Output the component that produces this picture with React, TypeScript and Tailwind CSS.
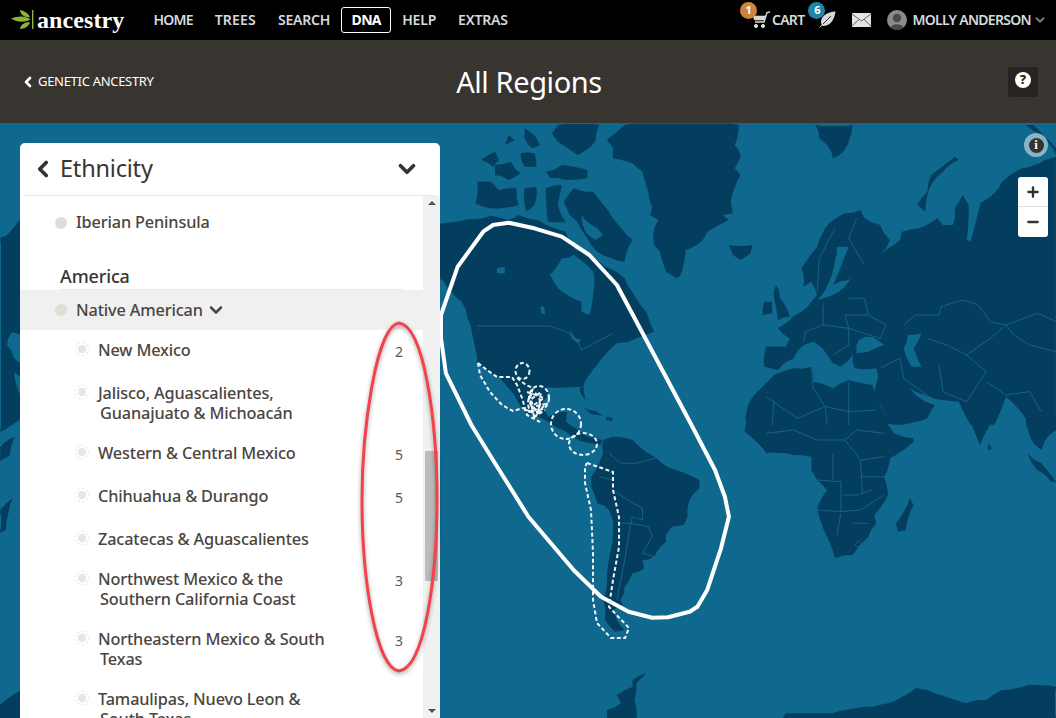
import { ChevronDown, ChevronLeft, Minus, Plus } from "lucide-react";

const FONT = "font-['Noto_Sans','Open_Sans',sans-serif]";

// the map was traced off two crops, so coordinates are converted back to page pixels
const upper = (pts: number[]) => pts.map((v, i) => (i % 2 ? 125 + v / 3 : 440 + v * 0.393));
const lower = (pts: number[]) => pts.map((v, i) => (i % 2 ? 420 + v / 3 : 440 + v * 0.393));
const str = (pts: number[]) => pts.join(" ");

// breaks long straight edges up so the coasts don't look ruler drawn
function rough(pts: number[]) {
  const out: number[] = [];
  const n = pts.length / 2;
  for (let i = 0; i < n; i++) {
    const x1 = pts[i * 2];
    const y1 = pts[i * 2 + 1];
    const x2 = pts[((i + 1) % n) * 2];
    const y2 = pts[((i + 1) % n) * 2 + 1];
    const len = Math.hypot(x2 - x1, y2 - y1);
    const steps = Math.max(1, Math.floor(len / 6));
    for (let s = 0; s < steps; s++) {
      const t = s / steps;
      const wobble = s === 0 ? 0 : Math.sin(x1 * 12.9 + y1 * 78.2 + s * 37.7) * 1.3;
      out.push(x1 + (x2 - x1) * t + ((y2 - y1) / (len || 1)) * wobble, y1 + (y2 - y1) * t - ((x2 - x1) / (len || 1)) * wobble);
    }
  }
  return out;
}

const LAND: number[][] = [
  // left edge wrap
  [0, 238, 6, 236, 22, 217, 22, 335, 12, 332, 7, 345, 14, 358, 22, 365, 22, 378, 14, 372, 20, 395, 22, 417, 0, 432],
  [0, 447, 15, 437, 10, 455, 0, 461],
  [0, 510, 13, 498, 6, 530, 0, 533],
  [0, 705, 22, 690, 22, 718, 0, 718],
  // north america
  [
    ...upper([-10, 295, 70, 283, 130, 272, 170, 285, 200, 270, 250, 285, 270, 300, 320, 320, 345, 375, 420, 425, 470, 460, 525, 560, 545, 620, 500, 640, 480, 650, 450, 655, 420, 690, 400, 720, 365, 780, 370, 825, 355, 790]),
    583, 387, 557, 388, 547, 387, 548, 393, 540, 405, 548, 417, 558, 412, 567, 412, 566, 422, 575, 428, 586, 436, 602, 440, 601, 445, 590, 443, 580, 441, 565, 431, 550, 423, 525, 413, 513, 393, 500, 378, 477, 362,
    ...upper([70, 580, 55, 530, 10, 470, -10, 450]),
  ],
  [584, 408, 596, 411, 603, 416, 591, 414],
  [606, 417, 613, 418, 612, 421, 606, 420],
  ...[
    [215, 10, 240, 30, 255, 60, 235, 70, 215, 40],
    [285, 25, 300, 0, 405, 0, 395, 50, 350, 90, 325, 70, 300, 50],
    [105, 105, 140, 80, 150, 105, 135, 125],
    [175, 30, 190, 45, 165, 60],
    [140, 120, 180, 110, 205, 145, 175, 165, 140, 150],
    [205, 85, 240, 85, 245, 125, 215, 125],
    [270, 140, 310, 120, 375, 135, 375, 160, 320, 165, 280, 160],
    [95, 170, 130, 170, 150, 195, 195, 190, 200, 240, 130, 250, 90, 235],
    [215, 190, 245, 185, 240, 240, 220, 260],
    [270, 190, 310, 180, 300, 240, 320, 290, 275, 290],
    [315, 230, 340, 190, 390, 200, 430, 260, 490, 345, 470, 410, 400, 380, 350, 290, 330, 270],
    // greenland
    [430, 40, 470, 0, 760, 0, 750, 60, 765, 95, 750, 130, 765, 150, 740, 230, 745, 265, 720, 270, 735, 285, 680, 320, 660, 355, 625, 375, 610, 455, 600, 458, 575, 440, 560, 380, 545, 360, 545, 310, 555, 285, 535, 270, 540, 245, 530, 200, 515, 140, 490, 115, 440, 100, 440, 70, 425, 45],
    // svalbard, iceland, britain, ireland, novaya zemlya
    [955, 0, 1050, 0, 1030, 75, 1000, 100, 985, 60, 965, 40],
    [735, 360, 795, 360, 790, 385, 765, 405, 745, 390],
    [855, 480, 865, 520, 890, 575, 860, 585, 850, 520],
    [825, 530, 845, 530, 845, 565, 820, 570],
    [1240, 200, 1250, 150, 1310, 95, 1320, 105, 1280, 140, 1245, 190, 1235, 260, 1215, 240],
    [1490, 0, 1510, 0, 1568, 70, 1568, 90, 1530, 30],
    // eurasia
    [1568, 95, 1540, 105, 1480, 130, 1430, 170, 1400, 215, 1375, 235, 1350, 350, 1340, 345, 1345, 240, 1330, 210, 1310, 250, 1305, 300, 1280, 300, 1265, 280, 1220, 310, 1175, 320, 1170, 345, 1140, 370, 1120, 390, 1145, 345, 1120, 300, 1080, 280, 1070, 255, 1030, 265, 990, 295, 960, 365, 920, 430, 925, 485, 945, 470, 960, 510, 945, 530, 920, 560, 885, 590, 860, 610, 890, 640, 880, 665, 830, 665, 825, 725, 860, 735, 900, 700, 925, 660, 950, 650, 985, 690, 1000, 715, 1020, 725, 1050, 690, 1055, 730, 1110, 730, 1115, 755, 1105, 800, 1150, 895, 1165, 900, 1240, 880, 1260, 840, 1235, 830, 1210, 810, 1195, 790, 1280, 825, 1320, 830, 1350, 900, 1410, 900, 1440, 815, 1490, 880, 1495, 900, 1568, 900, 1568, 95],
    // africa, north half
    [780, 860, 800, 810, 850, 750, 900, 730, 945, 725, 950, 770, 1000, 790, 1040, 765, 1100, 780, 1130, 860, 1160, 900, 780, 900],
  ].map(upper),
  ...[
    // africa, south half
    [780, 0, 775, 35, 830, 100, 900, 105, 945, 110, 945, 150, 960, 180, 985, 210, 960, 265, 985, 350, 1005, 415, 1050, 405, 1090, 350, 1110, 310, 1105, 285, 1140, 225, 1130, 170, 1145, 115, 1205, 65, 1205, 55, 1155, 40, 1130, 0],
    [1195, 235, 1205, 255, 1185, 330, 1165, 335, 1160, 310],
    // south america
    [415, 60, 440, 50, 490, 60, 530, 100, 565, 130, 600, 150, 660, 180, 660, 205, 635, 240, 630, 290, 620, 315, 590, 320, 575, 345, 575, 365, 545, 410, 515, 420, 520, 445, 490, 460, 470, 500, 460, 540, 465, 555, 440, 570, 450, 600, 470, 630, 445, 635, 420, 600, 415, 540, 425, 470, 435, 390, 440, 300, 430, 270, 400, 250, 385, 200, 385, 170, 405, 130, 415, 100],
    // antarctica and peninsula
    [870, 900, 880, 880, 1000, 880, 1100, 860, 1140, 850, 1210, 805, 1240, 810, 1340, 850, 1390, 840, 1430, 810, 1495, 795, 1568, 800, 1568, 900],
    [525, 758, 490, 780, 490, 800, 450, 825, 460, 850, 425, 870, 425, 900, 500, 900, 495, 840, 500, 790],
    // india tip, se asia
    [1350, 0, 1375, 75, 1410, 0],
    [1395, 70, 1405, 85, 1395, 92],
    [1490, 0, 1510, 70, 1530, 90, 1540, 60, 1568, 30, 1568, 0],
    [1495, 100, 1530, 130, 1568, 185, 1555, 185, 1520, 150],
  ].map(lower),
];

const SEAS: number[][] = [
  [280, 450, 310, 400, 340, 390, 390, 440, 390, 500, 380, 570, 360, 560, 360, 530, 300, 490],
  [145, 430, 165, 425, 165, 445, 145, 445],
  [255, 545, 265, 545, 268, 570, 258, 565],
  [360, 270, 400, 310, 415, 330, 395, 345, 370, 320],
  [1010, 365, 1040, 365, 1015, 440, 1000, 480, 1040, 465, 1050, 450, 1015, 500, 960, 525, 990, 470],
  [1065, 645, 1100, 635, 1130, 660, 1090, 680, 1060, 685],
  [1190, 630, 1225, 625, 1205, 670, 1225, 725, 1200, 725, 1180, 670],
  [330, 615, 345, 640, 360, 645, 350, 655, 335, 640],
];

const BORDERS: number[][] = [
  ...[
    [95, 603, 280, 603, 320, 620, 350, 645, 360, 675, 440, 625],
    [1005, 310, 965, 400, 960, 500],
    [1060, 280, 1040, 340, 1080, 420],
    [975, 540, 975, 600, 930, 620, 925, 650],
    [1030, 570, 1090, 570, 1135, 600, 1120, 640, 1040, 610, 1030, 570],
    [975, 600, 1040, 610, 1040, 660, 1000, 690],
    [1040, 520, 1080, 520, 1090, 570],
    [1180, 600, 1210, 570, 1270, 570, 1275, 545, 1330, 525, 1370, 540, 1400, 590, 1440, 600, 1520, 565, 1568, 590],
    [1440, 600, 1460, 630, 1500, 660, 1568, 680],
    [1240, 640, 1290, 660, 1340, 690, 1400, 640, 1440, 600],
    [1270, 720, 1280, 800, 1340, 830, 1390, 740, 1340, 690],
    [1390, 770, 1440, 810, 1500, 800, 1530, 860],
    [1120, 730, 1170, 700, 1180, 760, 1250, 820],
    [830, 815, 910, 880, 980, 845, 1040, 860, 1110, 855],
    [1040, 770, 1040, 860],
    [945, 725, 950, 790, 980, 845],
    [850, 830, 845, 900],
    [980, 845, 985, 900],
    [1040, 860, 1040, 900],
  ].map(upper),
  ...[
    [960, 180, 1020, 185, 1020, 275, 960, 270],
    [1020, 275, 1070, 270, 1110, 240, 1130, 225],
    [1070, 170, 1130, 170],
    [1000, 100, 1000, 180],
    [1070, 120, 1075, 220],
    [1025, 225, 1065, 225, 1100, 210],
    [1010, 345, 1020, 280],
    [1050, 310, 1090, 310],
    [1055, 375, 1065, 362, 1073, 372, 1062, 382, 1055, 375],
    [830, 40, 900, 30, 960, 60, 1030, 60, 1060, 30, 1130, 40],
    [1030, 60, 1070, 120, 1130, 110],
    [430, 100, 460, 130, 500, 130, 560, 110],
    [440, 210, 470, 235, 515, 265, 515, 300, 490, 290, 485, 310, 530, 320, 540, 350, 515, 400, 545, 410],
    [460, 310, 485, 310, 470, 420, 450, 540],
    [405, 170, 440, 180],
  ].map(lower),
];

const DASHED: number[][] = [
  [478, 363, 480, 375, 490, 392, 502, 405, 513, 411, 523, 408, 531, 412],
  [478, 363, 487, 370, 497, 377, 512, 377, 517, 385, 522, 398, 527, 415, 540, 422],
  [517, 378, 526, 385, 533, 388, 530, 398, 535, 410, 528, 412],
  [527, 392, 544, 398, 531, 407, 546, 404, 534, 416, 530, 400, 541, 392, 538, 414],
  [524, 410, 540, 412, 533, 418, 545, 410],
  [587, 463, 613, 472, 613, 490, 619, 517, 619, 547, 613, 580, 609, 607, 629, 628, 625, 638, 611, 638, 597, 623, 593, 600, 593, 553, 591, 510, 585, 483, 585, 467, 587, 463],
];

const OUTLINE = [
  691.5, 425, 636.5, 321.7, 616.9, 285, 589.3, 255, 561.8, 236.7, 534.3, 228.3, 508.8, 222.7, 493, 225, 483.2, 231.7, 457.7, 266.7, 441, 315, 441, 338.3, 445.9, 373.3, 471.4, 425, 495, 463.3, 528.4, 516.7, 573.6, 570, 601, 596.7, 628.6, 611.7, 652.2, 617.7, 668, 617.3, 689.6, 611.7, 697.4, 606.7, 707.2, 590, 721, 548.3, 728.9, 516.7, 724.9, 496.7, 715, 470, 691.5, 425,
];

function WorldMap() {
  return (
    <svg className="absolute inset-0 h-full w-full" viewBox="0 123 1056 595" aria-hidden="true">
      {LAND.map((pts, i) => (
        <polygon key={i} points={str(rough(pts))} fill="#043e5e" />
      ))}
      {SEAS.map((pts, i) => (
        <polygon key={i} points={str(rough(upper(pts)))} fill="#0f688e" />
      ))}
      {BORDERS.map((pts, i) => (
        <polyline key={i} points={str(pts)} fill="none" stroke="#17618a" strokeWidth="1" />
      ))}
      <polygon points={str(OUTLINE)} fill="none" stroke="#ffffff" strokeWidth="4" strokeLinejoin="round" />
      <g fill="none" stroke="#f2f5f6" strokeWidth="2" strokeDasharray="4 2.5">
        {DASHED.map((pts, i) => (
          <polyline key={i} points={str(pts)} />
        ))}
        <ellipse cx="522.5" cy="371" rx="7" ry="8" />
        <ellipse cx="539" cy="398" rx="10" ry="12" />
        <ellipse cx="534" cy="403" rx="6" ry="10" />
        <ellipse cx="566" cy="424" rx="15" ry="15" />
        <ellipse cx="583" cy="444" rx="14" ry="11" />
      </g>
    </svg>
  );
}

function Logo() {
  return (
    <div className="flex items-center">
      <svg width="25" height="22" viewBox="0 0 25 22" aria-hidden="true">
        <rect x="22" y="1" width="1.4" height="19" fill="#8eb33c" />
        <path d="M20.5 10.5 C15 6.5 8 7 1 9.5 C6 13 14 14 20.5 10.5Z" fill="#8eb33c" />
        <path d="M20 8.5 C19 5 15 2 10 1 C10 5 14 8.5 20 8.5Z" fill="#8eb33c" />
        <path d="M20 13 C14 13 10.5 16 10 20 C15 20 19 17 20 13Z" fill="#8eb33c" />
      </svg>
      <span className="ml-[2px] font-['Liberation_Serif',serif] text-[24px] leading-none tracking-[0.1px] text-white">ancestry</span>
    </div>
  );
}

function Badge({ color, children }: { color: string; children: string }) {
  return (
    <span className={`absolute top-[2px] flex h-[17px] w-[17px] items-center justify-center rounded-full text-[11px] font-bold text-white ${color}`}>
      {children}
    </span>
  );
}

function TopBar() {
  return (
    <div className="flex h-10 items-center bg-black pb-[1px] pl-[10px] text-[14px] font-semibold tracking-[-0.7px] text-[#d5dade]">
      <Logo />
      <div className="ml-[29px] flex items-center gap-[22px]">
        <span className="tracking-[-0.8px]">HOME</span>
        <span className="tracking-[0.2px]">TREES</span>
        <span className="tracking-[-0.2px]">SEARCH</span>
      </div>
      <span className="ml-[11px] flex h-[26px] w-[50px] items-center justify-center rounded-[3px] border border-white font-bold text-white">DNA</span>
      <span className="ml-[11px] tracking-[-0.2px]">HELP</span>
      <span className="ml-[22px] tracking-[-0.2px]">EXTRAS</span>
      <div className="relative ml-auto flex h-full items-center pr-[9px]">
        <Badge color="left-[-12px] bg-[#cc8539]">1</Badge>
        <svg width="19" height="18" viewBox="0 0 19 18" fill="none" stroke="#d9d9d9" aria-hidden="true">
          <path d="M18 1 L15 1.5 L12 11 L3 11" strokeWidth="1.4" />
          <path d="M1 5 H14 L12 9 H2.5Z" fill="#d9d9d9" strokeWidth="0.6" />
          <circle cx="4" cy="15" r="1.6" fill="#d9d9d9" />
          <circle cx="11" cy="15" r="1.6" fill="#d9d9d9" />
        </svg>
        <span className="ml-px">CART</span>
        <div className="relative ml-[15px] flex h-full items-center">
          <Badge color="left-[-11px] bg-[#1f84a9]">6</Badge>
          <svg width="17" height="17" viewBox="0 0 17 17" aria-hidden="true">
            <path d="M16.5 0.5 C8 1 2 5 2 11 C2 13 3 14.5 4 15 C11 15 15.5 9 16.5 0.5Z" fill="#d9d9d9" />
            <path d="M3 14 L12 5" stroke="#000" strokeWidth="0.8" />
            <path d="M0.5 16.5 L4 13" stroke="#d9d9d9" strokeWidth="1" />
          </svg>
        </div>
        <svg className="ml-[16px]" width="19" height="14" viewBox="0 0 19 14" aria-hidden="true">
          <rect width="19" height="14" fill="#e4e4e4" />
          <path d="M0 1 L9.5 8 L19 1 M0 13 L7 6.5 M19 13 L12 6.5" stroke="#555" strokeWidth="0.9" fill="none" />
        </svg>
        <svg className="ml-[16px]" width="20" height="20" viewBox="0 0 20 20" aria-hidden="true">
          <circle cx="10" cy="10" r="10" fill="#8a8a8a" />
          <circle cx="10" cy="8" r="4.2" fill="#4a4a4a" />
          <path d="M3.5 17.5 C5 13 15 13 16.5 17.5 C13 20.8 7 20.8 3.5 17.5Z" fill="#4a4a4a" />
        </svg>
        <span className="ml-[5px]">MOLLY ANDERSON</span>
        <ChevronDown className="ml-[2px] text-[#777]" size={14} strokeWidth={3.5} />
      </div>
    </div>
  );
}

function SubBar() {
  return (
    <div className="grid h-[83px] grid-cols-[1fr_auto_1fr] items-center bg-[#383430] pr-[18px] pl-[20px] text-white">
      <div className="flex items-center text-[13px] tracking-[-0.3px]">
        <ChevronLeft className="mr-[2px]" size={16} strokeWidth={4} />
        GENETIC ANCESTRY
      </div>
      <h1 className="text-[29px] tracking-[-0.4px]">All Regions</h1>
      <div className="flex h-[30px] w-[30px] items-center justify-center justify-self-end rounded-[3px] bg-[#272320]">
        <span className="mb-[4px] flex h-4 w-4 items-center justify-center rounded-full bg-white text-[13px] font-extrabold text-[#272320]">?</span>
      </div>
    </div>
  );
}

const SUBREGIONS = [
  { lines: ["New Mexico"], count: "2", gap: "mt-[10px]" },
  { lines: ["Jalisco, Aguascalientes,", "Guanajuato & Michoacán"], count: "", gap: "mt-[23px]" },
  { lines: ["Western & Central Mexico"], count: "5", gap: "mt-[20px]" },
  { lines: ["Chihuahua & Durango"], count: "5", gap: "mt-[23px]" },
  { lines: ["Zacatecas & Aguascalientes"], count: "", gap: "mt-[23px]" },
  { lines: ["Northwest Mexico & the", "Southern California Coast"], count: "3", gap: "mt-[20px]" },
  { lines: ["Northeastern Mexico & South", "Texas"], count: "3", gap: "mt-[20px]" },
  { lines: ["Tamaulipas, Nuevo Leon &", "South Texas"], count: "", gap: "mt-[20px]" },
];

function SubRegion({ lines, count, gap }: { lines: string[]; count: string; gap: string }) {
  return (
    <div className={`relative flex pl-[55px] ${gap}`}>
      <span className="mt-[2px] flex h-[14px] w-[14px] shrink-0 items-center justify-center rounded-full border border-dashed border-[#e8e8e8]">
        <span className="h-[8px] w-[8px] rounded-full bg-[#e6e6e6]" />
      </span>
      <div className="ml-[9px] w-[250px]">
        <div className="h-5 leading-5 whitespace-nowrap">{lines[0]}</div>
        {lines[1] && <div className="h-5 pl-[2px] leading-5 whitespace-nowrap">{lines[1]}</div>}
      </div>
      <span className="ml-[43px] h-5 w-[16px] text-center text-[14px] leading-6 font-normal text-[#5d5853]">{count}</span>
    </div>
  );
}

function Panel() {
  return (
    <div className="absolute top-5 left-5 flex h-[575px] w-[420px] flex-col rounded-t-[5px] bg-white text-[#4a4540]">
      <div className="mx-[5px] flex h-[53px] shrink-0 items-center justify-between border-b border-[#e4e4e4] pr-[15px] pl-[5px]">
        <div className="flex items-center text-[#38342f]">
          <ChevronLeft size={26} strokeWidth={3.5} />
          <span className="ml-[4px] text-[23.5px] tracking-[-0.2px]">Ethnicity</span>
        </div>
        <ChevronDown size={26} strokeWidth={3.5} className="text-[#38342f]" />
      </div>
      <div className="flex min-h-0 flex-1">
        <div className="w-[403px] overflow-hidden text-[16.3px] font-medium tracking-[-0.15px]">
          <div className="flex h-[52px] items-center pt-[1px] pl-[35px]">
            <span className="h-3 w-3 rounded-full bg-[#dfddd6]" />
            <span className="ml-[9px]">Iberian Peninsula</span>
          </div>
          <div className="mt-[14px] mr-[20px] ml-[40px] h-[28px] border-b border-[#e6e6e6] text-[18px] leading-[28px] text-[#38342f]">America</div>
          <div className="flex h-10 items-center bg-[#f0f0f0] pl-[35px]">
            <span className="h-3 w-3 rounded-full bg-[#dfddd6]" />
            <span className="ml-[9px]">Native American</span>
            <ChevronDown className="ml-[3px]" size={20} strokeWidth={3} />
          </div>
          {SUBREGIONS.map((row) => (
            <SubRegion key={row.lines[0]} {...row} />
          ))}
        </div>
        <div className="flex w-[17px] flex-col items-center justify-between bg-[#f1f1f1] py-[5px]">
          <span className="h-0 w-0 border-x-[4px] border-b-[4px] border-x-transparent border-b-[#505050]" />
          <span className="h-0 w-0 border-x-[4px] border-t-[4px] border-x-transparent border-t-[#505050]" />
        </div>
      </div>
      <div className="absolute top-[308px] right-[2px] h-[130px] w-[13px] bg-[#bcbcbc]" />
    </div>
  );
}

function MapControls() {
  return (
    <>
      <div className="absolute top-[10px] right-[8px] flex h-6 w-6 items-center justify-center rounded-full bg-white/50">
        <span className="flex h-[15px] w-[15px] items-center justify-center rounded-full bg-[#333] font-['Liberation_Serif',serif] text-[13px] font-bold text-white">i</span>
      </div>
      <div className="absolute top-[54px] right-[8px] flex h-[60px] w-[30px] flex-col rounded-[3px] bg-white text-[#333]">
        <div className="flex h-[30px] items-center justify-center border-b border-[#ddd]">
          <Plus size={16} strokeWidth={3.5} />
        </div>
        <div className="flex h-[30px] items-center justify-center">
          <Minus size={16} strokeWidth={3.5} />
        </div>
      </div>
    </>
  );
}

function Annotation() {
  return (
    <svg className="pointer-events-none absolute inset-0 h-full w-full drop-shadow-[0_2px_2px_rgba(0,0,0,0.35)]" viewBox="0 0 1056 718" aria-hidden="true">
      <path
        d="M399 323 C376 326 362 430 362 500 C362 580 376 668 399 671 C424 668 437 580 437 500 C437 420 424 326 399 323Z"
        fill="none"
        stroke="#f2434a"
        strokeWidth="3"
      />
    </svg>
  );
}

export default function App() {
  return (
    <div className={`relative flex h-[718px] w-[1056px] flex-col overflow-hidden ${FONT}`}>
      <TopBar />
      <SubBar />
      <div className="relative flex-1 bg-[#0f688e]">
        <WorldMap />
        <Panel />
        <MapControls />
      </div>
      <Annotation />
    </div>
  );
}
